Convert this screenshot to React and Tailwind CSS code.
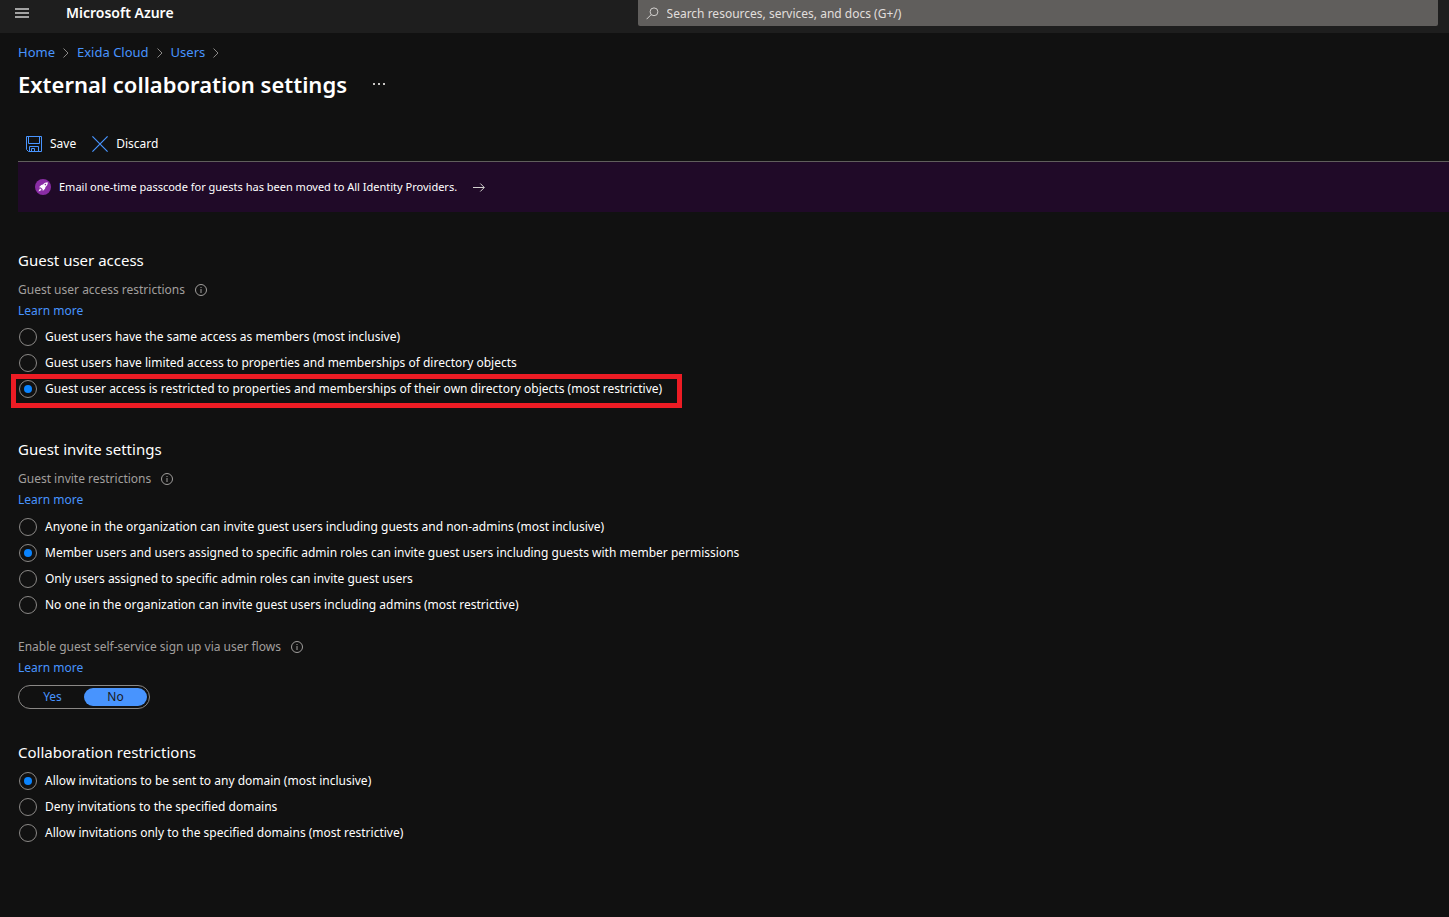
import { useState } from 'react'

const accessOptions = [
  { label: 'Guest users have the same access as members (most inclusive)' },
  { label: 'Guest users have limited access to properties and memberships of directory objects' },
  {
    label: 'Guest user access is restricted to properties and memberships of their own directory objects (most restrictive)',
    highlighted: true,
  },
]

const inviteOptions = [
  { label: 'Anyone in the organization can invite guest users including guests and non-admins (most inclusive)' },
  { label: 'Member users and users assigned to specific admin roles can invite guest users including guests with member permissions' },
  { label: 'Only users assigned to specific admin roles can invite guest users' },
  { label: 'No one in the organization can invite guest users including admins (most restrictive)' },
]

const domainOptions = [
  { label: 'Allow invitations to be sent to any domain (most inclusive)' },
  { label: 'Deny invitations to the specified domains' },
  { label: 'Allow invitations only to the specified domains (most restrictive)' },
]

export default function App() {
  return (
    <div className="min-h-screen bg-[#111111] font-['Noto_Sans','Open_Sans',sans-serif] text-xs text-white">
      <TopBar />
      <main className="pl-[18px] pt-2.5 pb-10">
        <Breadcrumb />
        <div className="mt-[5px] flex h-8 items-center gap-6">
          <h1 className="text-[22px] leading-8 font-semibold whitespace-nowrap">External collaboration settings</h1>
          <button className="flex h-4 w-4 items-center justify-center" aria-label="More actions">
            <svg width="12" height="2" viewBox="0 0 12 2" fill="#c8c6c4">
              <rect x="0" width="2" height="2" />
              <rect x="5" width="2" height="2" />
              <rect x="10" width="2" height="2" />
            </svg>
          </button>
        </div>
        <CommandBar />
        <Banner />
        <form>
          <section className="mt-9">
            <Heading>Guest user access</Heading>
            <div className="mt-[7px]">
              <FieldLabel>Guest user access restrictions</FieldLabel>
            </div>
            <div className="mt-[3px]">
              <RadioList name="access" title="Guest user access restrictions" options={accessOptions} initial={2} />
            </div>
          </section>
          <section className="mt-[35px]">
            <Heading>Guest invite settings</Heading>
            <div className="mt-[7px]">
              <FieldLabel>Guest invite restrictions</FieldLabel>
            </div>
            <div className="mt-1">
              <RadioList name="invite" title="Guest invite restrictions" options={inviteOptions} initial={1} />
            </div>
            <div className="mt-[18px]">
              <FieldLabel>Enable guest self-service sign up via user flows</FieldLabel>
            </div>
            <YesNoToggle />
          </section>
          <section className="mt-[31px]">
            <Heading>Collaboration restrictions</Heading>
            <div className="mt-1">
              <RadioList name="domains" title="Collaboration restrictions" options={domainOptions} initial={0} />
            </div>
          </section>
        </form>
      </main>
    </div>
  )
}

function TopBar() {
  return (
    <header className="flex h-[33px] items-start bg-[#1e1e1e]">
      <div className="flex h-[26px] w-[44%] shrink-0 items-center pl-[15px]">
        <button aria-label="Show portal menu">
          <svg width="14" height="10" viewBox="0 0 14 10" fill="#a3a3a3" shapeRendering="crispEdges">
            <rect y="0" width="14" height="2" />
            <rect y="4" width="14" height="2" />
            <rect y="8" width="14" height="2" />
          </svg>
        </button>
        <a href="#" className="ml-[37px] text-sm leading-5 font-semibold">Microsoft Azure</a>
      </div>
      <label className="mr-[11px] flex h-[26px] flex-1 items-center gap-2 rounded-b-xs bg-[#605e5c] pl-2">
        <svg width="13" height="13" viewBox="0 0 13 13" fill="none" stroke="#d2d0ce">
          <circle cx="8" cy="4.8" r="3.9" />
          <path d="M5.2 7.6 0.6 12.2" />
        </svg>
        <input
          type="search"
          aria-label="Search"
          placeholder="Search resources, services, and docs (G+/)"
          className="h-full flex-1 bg-transparent text-xs placeholder:text-[#e1dfdd] outline-none"
        />
      </label>
    </header>
  )
}

function Breadcrumb() {
  return (
    <nav className="flex h-5 items-center gap-2 text-[13px] text-[#4894fe]" aria-label="Breadcrumb">
      {['Home', 'Exida Cloud', 'Users'].map((item) => (
        <span key={item} className="flex items-center gap-2">
          <a href="#" className="hover:underline">{item}</a>
          <svg width="6" height="10" viewBox="0 0 6 10" fill="none" stroke="#8a8886">
            <path d="M0.5 0.5 5 5 0.5 9.5" />
          </svg>
        </span>
      ))}
    </nav>
  )
}

function CommandBar() {
  return (
    <div className="mt-[26px] flex h-[35px] items-center gap-4 pl-2">
      <button className="flex items-center gap-2">
        <svg width="16" height="16" viewBox="0 0 16 16" fill="none" stroke="#4894fe">
          <path d="M0.5 0.5h15v15H2.5l-2-2z" />
          <path d="M2.5 0.5v7h11v-7" />
          <path d="M3.5 15.5v-5h9v5" />
          <path d="M5.5 15.5v-3h3v3" />
        </svg>
        <span className="leading-5">Save</span>
      </button>
      <button className="flex items-center gap-2">
        <svg width="16" height="16" viewBox="0 0 16 16" fill="none" stroke="#4894fe" strokeWidth="1.2">
          <path d="M0.4 0.4 15.6 15.6M15.6 0.4 0.4 15.6" />
        </svg>
        <span className="leading-5">Discard</span>
      </button>
    </div>
  )
}

function Banner() {
  return (
    <div className="border-t border-[#605e5c]">
      <a href="#" className="flex h-[50px] items-center gap-2 bg-[#200a28] pl-[17px]">
        <svg width="16" height="16" viewBox="0 0 16 16">
          <circle cx="8" cy="8" r="8" fill="#8a2da5" />
          <path d="M12.8 3.2c-2 0-3.6.8-4.8 2.3L6.2 6 4 8.2l1.8.2 1.8 1.8.2 1.8L10 9.8l.5-1.8c1.5-1.2 2.3-2.8 2.3-4.8z" fill="#fff" />
          <path d="M5 9.3 3.4 12.6 6.7 11z" fill="#fff" />
          <circle cx="10.4" cy="5.6" r="0.8" fill="#8a2da5" />
        </svg>
        <span className="mr-2 text-[11px] leading-5">Email one-time passcode for guests has been moved to All Identity Providers.</span>
        <svg width="12" height="9" viewBox="0 0 12 9" fill="none" stroke="#d2d0ce">
          <path d="M0 4.5h11M7.3 0.5l4 4-4 4" />
        </svg>
      </a>
    </div>
  )
}

function Heading({ children }) {
  return <h2 className="text-[15px] leading-6">{children}</h2>
}

function FieldLabel({ children }) {
  return (
    <>
      <div className="flex h-[21px] items-center gap-2.5 text-[#a19f9d]">
        <span>{children}</span>
        <button type="button" aria-label="More information">
          <svg width="12" height="12" viewBox="0 0 12 12" fill="none" stroke="#a19f9d">
            <circle cx="6" cy="6" r="5.5" />
            <path d="M6 5v4M6 3v1" />
          </svg>
        </button>
      </div>
      <a href="#" className="flex h-[21px] w-fit items-center text-[#4894fe] hover:underline">Learn more</a>
    </>
  )
}

function RadioList({ name, title, options, initial }) {
  const [selected, setSelected] = useState(initial)

  return (
    <div role="radiogroup" aria-label={title}>
      {options.map((option, i) => (
        <label key={option.label} className="relative flex h-[26px] w-fit items-center gap-2 pl-px">
          <input
            type="radio"
            name={name}
            checked={selected === i}
            onChange={() => setSelected(i)}
            className="grid h-[18px] w-[18px] shrink-0 appearance-none place-content-center rounded-full border border-[#8a8886] checked:before:h-2 checked:before:w-2 checked:before:rounded-full checked:before:bg-[#0a84ff]"
          />
          <span>{option.label}</span>
          {option.highlighted && (
            <span className="pointer-events-none absolute -top-0.5 -right-5 -bottom-1.5 -left-[7px] border-5 border-[#ed1c24]" />
          )}
        </label>
      ))}
    </div>
  )
}

function YesNoToggle() {
  const [enabled, setEnabled] = useState(false)

  return (
    <div className="mt-[7px] flex h-6 w-[132px] items-center rounded-full border border-[#8a8886] px-0.5">
      <button
        type="button"
        aria-pressed={enabled}
        onClick={() => setEnabled(true)}
        className={`h-[18px] flex-1 rounded-full leading-[18px] ${enabled ? 'bg-[#4894fe] text-[#1b1a19]' : 'text-[#4894fe]'}`}
      >
        Yes
      </button>
      <button
        type="button"
        aria-pressed={!enabled}
        onClick={() => setEnabled(false)}
        className={`h-[18px] flex-1 rounded-full leading-[18px] ${enabled ? 'text-[#4894fe]' : 'bg-[#4894fe] text-[#1b1a19]'}`}
      >
        No
      </button>
    </div>
  )
}
